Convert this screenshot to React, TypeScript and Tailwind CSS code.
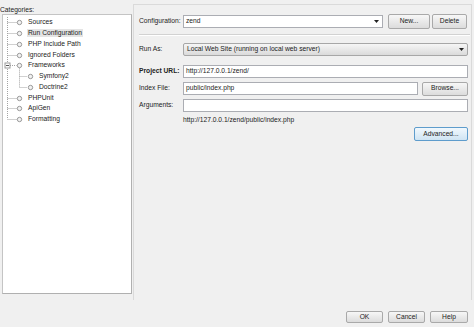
import React from "react";

const tree = [
  { label: "Sources", depth: 0 },
  { label: "Run Configuration", depth: 0, selected: true },
  { label: "PHP Include Path", depth: 0 },
  { label: "Ignored Folders", depth: 0 },
  { label: "Frameworks", depth: 0, expander: true },
  { label: "Symfony2", depth: 1 },
  { label: "Doctrine2", depth: 1 },
  { label: "PHPUnit", depth: 0 },
  { label: "ApiGen", depth: 0 },
  { label: "Formatting", depth: 0 },
];

const ROW = 10.75;
const center = (i: number) => 2 + ROW / 2 + ROW * i;

function TreeLines() {
  const last = center(tree.length - 1);
  return (
    <svg className="absolute left-0 top-0 pointer-events-none" width="40" height="120" viewBox="0 0 40 120">
      <g stroke="#a3a3a3" strokeWidth="1" strokeDasharray="1 1" fill="none">
        <line x1="4.5" y1="2" x2="4.5" y2={last} />
        {tree.map((t, i) =>
          t.depth === 0 ? (
            <line key={i} x1={t.expander ? 7 : 4.5} y1={Math.round(center(i)) + 0.5} x2="13.5" y2={Math.round(center(i)) + 0.5} />
          ) : (
            <line key={i} x1="16.5" y1={Math.round(center(i)) + 0.5} x2="24.5" y2={Math.round(center(i)) + 0.5} />
          )
        )}
        <line x1="16.5" y1={center(4) + 3} x2="16.5" y2={center(6)} />
      </g>
      {/* expander */}
      <rect x="2" y={Math.round(center(4)) - 2} width="5" height="5" fill="#fff" stroke="#9a9a9a" strokeWidth="1" />
      <line x1="3" y1={Math.round(center(4)) + 0.5} x2="6" y2={Math.round(center(4)) + 0.5} stroke="#555" strokeWidth="1" />
      {tree.map((t, i) => (
        <circle
          key={i}
          cx={t.depth === 0 ? 16.5 : 27.5}
          cy={Math.round(center(i)) + 0.5}
          r="2.2"
          fill="#f2f2f2"
          stroke="#8e8e8e"
          strokeWidth="0.9"
        />
      ))}
    </svg>
  );
}

function Button({ children, className = "", focused = false }: { children: React.ReactNode; className?: string; focused?: boolean }) {
  return (
    <div
      className={
        "flex items-center justify-center rounded-[2px] border text-[#222] " +
        (focused
          ? "border-[#5e9ccc] bg-gradient-to-b from-[#f1f8fd] to-[#cfe4f3] "
          : "border-[#a9a9a9] bg-gradient-to-b from-[#f7f7f7] to-[#dcdcdc] ") +
        className
      }
    >
      {children}
    </div>
  );
}

function Arrow() {
  return (
    <svg width="5" height="3" viewBox="0 0 5 3" className="shrink-0">
      <path d="M0 0 H5 L2.5 3 Z" fill="#222" />
    </svg>
  );
}

export default function App() {
  return (
    <div className="w-[474px] h-[327px] bg-[#f0f0f0] flex flex-col overflow-hidden font-['Liberation_Sans',Arial,sans-serif] text-[6.7px] text-[#222]">
      <div className="flex h-[300px]">
        {/* LEFT */}
        <div className="w-[132px] flex flex-col">
          <div className="h-[14px] pt-[6px] leading-[8px]">Categories:</div>
          <div className="ml-[2px] w-[130px] h-[280px] bg-white border border-[#c4c4c4] border-r-[#b0b0b0] border-b-[#b0b0b0]">
            <div className="relative pt-[2px]">
              <TreeLines />
              {tree.map((t, i) => (
                <div
                  key={i}
                  className={"flex items-center h-[10.75px] " + (t.depth === 0 ? "pl-[25px]" : "pl-[36px]")}
                >
                  <span className={"leading-[8px] px-[1px] -ml-[1px] " + (t.selected ? "bg-[#e4e4e4]" : "")}>{t.label}</span>
                </div>
              ))}
            </div>
          </div>
        </div>

        {/* RIGHT */}
        <div className="ml-[1px] mt-[4px] w-[339px] h-[296px] border border-[#dadada] border-b-0 pl-[5px] pr-[3px] flex flex-col">
          <div className="mt-[9px] h-[15px] flex items-center">
            <div className="w-[44px]">Configuration:</div>
            <div className="w-[200px] h-[13px] bg-white border border-[#abadb3] flex items-center pl-[2px] pr-[3px]">
              <span className="flex-1">zend</span>
              <Arrow />
            </div>
            <Button className="ml-[5px] w-[42px] h-[15px]">New...</Button>
            <Button className="ml-[2px] w-[35px] h-[15px]">Delete</Button>
          </div>

          <div className="mt-[5px] -mr-[2px] border-t border-[#d2d2d2] border-b border-b-white" />

          <div className="mt-[7px] h-[13px] flex items-center">
            <div className="w-[44px]">Run As:</div>
            <div className="flex-1 h-[13px] rounded-[2px] border border-[#a7a7a7] bg-gradient-to-b from-[#f6f6f6] to-[#dadada] flex items-center pl-[3px] pr-[3px]">
              <span className="flex-1">Local Web Site (running on local web server)</span>
              <Arrow />
            </div>
          </div>

          <div className="mt-[9px] h-[13px] flex items-center">
            <div className="w-[44px] font-bold">Project URL:</div>
            <div className="flex-1 h-[13px] bg-white border border-[#abadb3] flex items-center pl-[2px]">http://127.0.0.1/zend/</div>
          </div>

          <div className="mt-[4px] h-[13px] flex items-center">
            <div className="w-[44px]">Index File:</div>
            <div className="flex-1 h-[13px] bg-white border border-[#abadb3] flex items-center pl-[2px]">public/index.php</div>
            <Button className="ml-[4px] w-[46px] h-[14px]">Browse...</Button>
          </div>

          <div className="mt-[4px] h-[13px] flex items-center">
            <div className="w-[44px]">Arguments:</div>
            <div className="flex-1 h-[13px] bg-white border border-[#abadb3]" />
          </div>

          <div className="mt-[4px] h-[8px] leading-[8px] pl-[44px]">http://127.0.0.1/zend/public/index.php</div>

          <div className="mt-[3px] flex justify-end">
            <Button focused className="w-[54px] h-[14px]">Advanced...</Button>
          </div>
        </div>
      </div>

      {/* BOTTOM */}
      <div className="flex justify-end gap-[5px] pr-[6px] pt-[11px]">
        <Button className="w-[37px] h-[12px]">OK</Button>
        <Button className="w-[37px] h-[12px]">Cancel</Button>
        <Button className="w-[38px] h-[12px]">Help</Button>
      </div>
    </div>
  );
}
